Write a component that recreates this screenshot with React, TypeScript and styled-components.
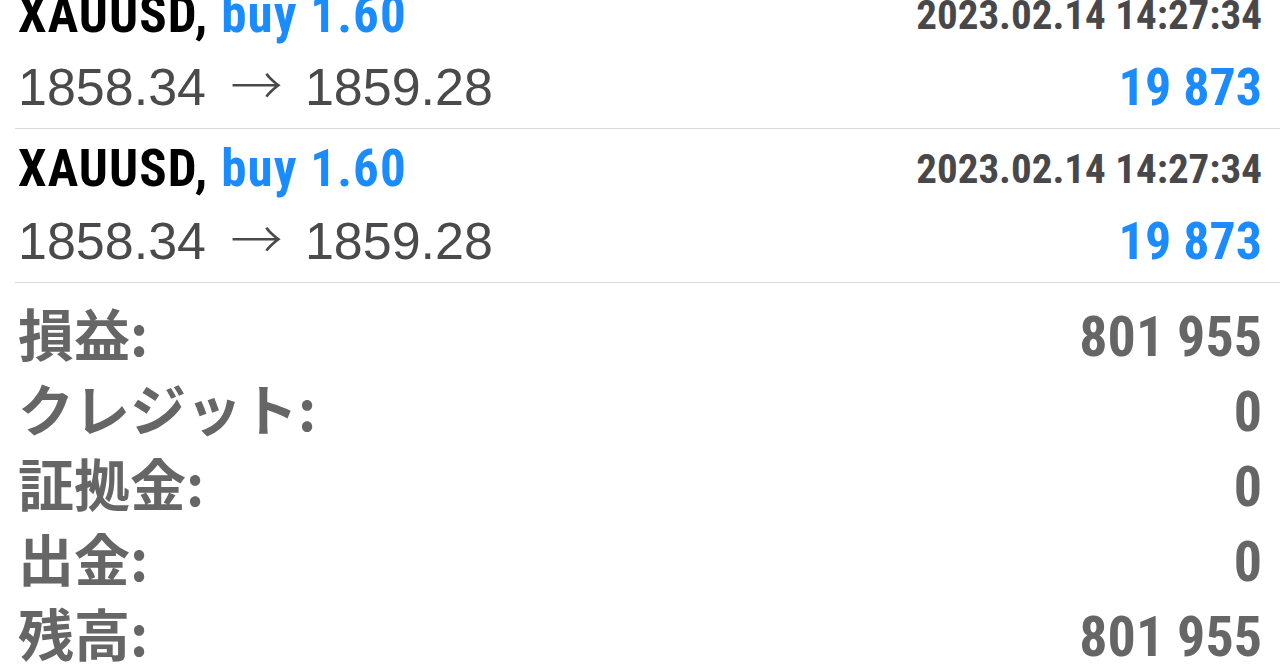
import styled, { createGlobalStyle } from "styled-components";

const GlobalStyle = createGlobalStyle`
  html, body {
    margin: 0;
    padding: 0;
    background: #fff;
  }
  body {
    overflow: hidden;
  }
`;

const Page = styled.main`
  width: 1280px;
  height: 670px;
  overflow: hidden;
  background: #fff;
  font-family: "Liberation Sans", Arial, sans-serif;
`;

const TradeList = styled.ul`
  list-style: none;
  margin: -25px 0 0 15px;
  padding: 0;
`;

const Trade = styled.li`
  display: flex;
  flex-direction: column;
  gap: 8px;
  padding: 10px 18px 15px 3px;
  border-bottom: 1px solid #dadada;
`;

const Line = styled.div`
  display: flex;
  justify-content: space-between;
  align-items: baseline;
  height: 60px;
  line-height: 60px;
  white-space: nowrap;
`;

const Title = styled.span`
  font-family: Roboto, sans-serif;
  font-stretch: 75%;
  font-weight: 700;
  font-size: 51px;
  letter-spacing: 1.1px;
  color: #000;
`;

const Side = styled.span`
  color: #1a8cff;
`;

const Time = styled.span`
  align-self: flex-start;
  font-family: Roboto, sans-serif;
  font-stretch: 75%;
  font-weight: 700;
  font-size: 41px;
  color: #48484a;
`;

const Prices = styled.span`
  font-size: 52px;
  color: #4a4a4c;
`;

const Arrow = styled.span`
  font-family: "Noto Sans CJK JP", sans-serif;
  font-weight: 300;
  margin: 0 8px 0 10px;
`;

const Profit = styled.span`
  font-family: Roboto, sans-serif;
  font-stretch: 75%;
  font-weight: 700;
  font-size: 52px;
  color: #1a8cff;
`;

const Summary = styled.dl`
  margin: 0;
  padding: 11px 18px 0 18px;
`;

const SummaryRow = styled.div`
  display: flex;
  justify-content: space-between;
  align-items: baseline;
  height: 75px;
  line-height: 75px;
  color: #666;
`;

const Label = styled.dt`
  font-family: "Noto Sans CJK JP", sans-serif;
  font-weight: 700;
  font-size: 56px;
`;

const Value = styled.dd`
  margin: 0;
  font-family: Roboto, sans-serif;
  font-stretch: 75%;
  font-weight: 700;
  font-size: 56px;
`;

const trades = [
  { symbol: "XAUUSD", side: "buy 1.60", time: "2023.02.14 14:27:34", open: "1858.34", close: "1859.28", profit: "19 873" },
  { symbol: "XAUUSD", side: "buy 1.60", time: "2023.02.14 14:27:34", open: "1858.34", close: "1859.28", profit: "19 873" },
];

const totals = [
  { label: "損益:", value: "801 955" },
  { label: "クレジット:", value: "0" },
  { label: "証拠金:", value: "0" },
  { label: "出金:", value: "0" },
  { label: "残高:", value: "801 955" },
];

const App = () => {
  return (
    <Page>
      <GlobalStyle />
      <TradeList>
        {trades.map((t, i) => (
          <Trade key={i}>
            <Line>
              <Title>
                {t.symbol}, <Side>{t.side}</Side>
              </Title>
              <Time>{t.time}</Time>
            </Line>
            <Line>
              <Prices>
                {t.open} <Arrow>→</Arrow> {t.close}
              </Prices>
              <Profit>{t.profit}</Profit>
            </Line>
          </Trade>
        ))}
      </TradeList>
      <Summary>
        {totals.map((r) => (
          <SummaryRow key={r.label}>
            <Label>{r.label}</Label>
            <Value>{r.value}</Value>
          </SummaryRow>
        ))}
      </Summary>
    </Page>
  );
};

export default App;
